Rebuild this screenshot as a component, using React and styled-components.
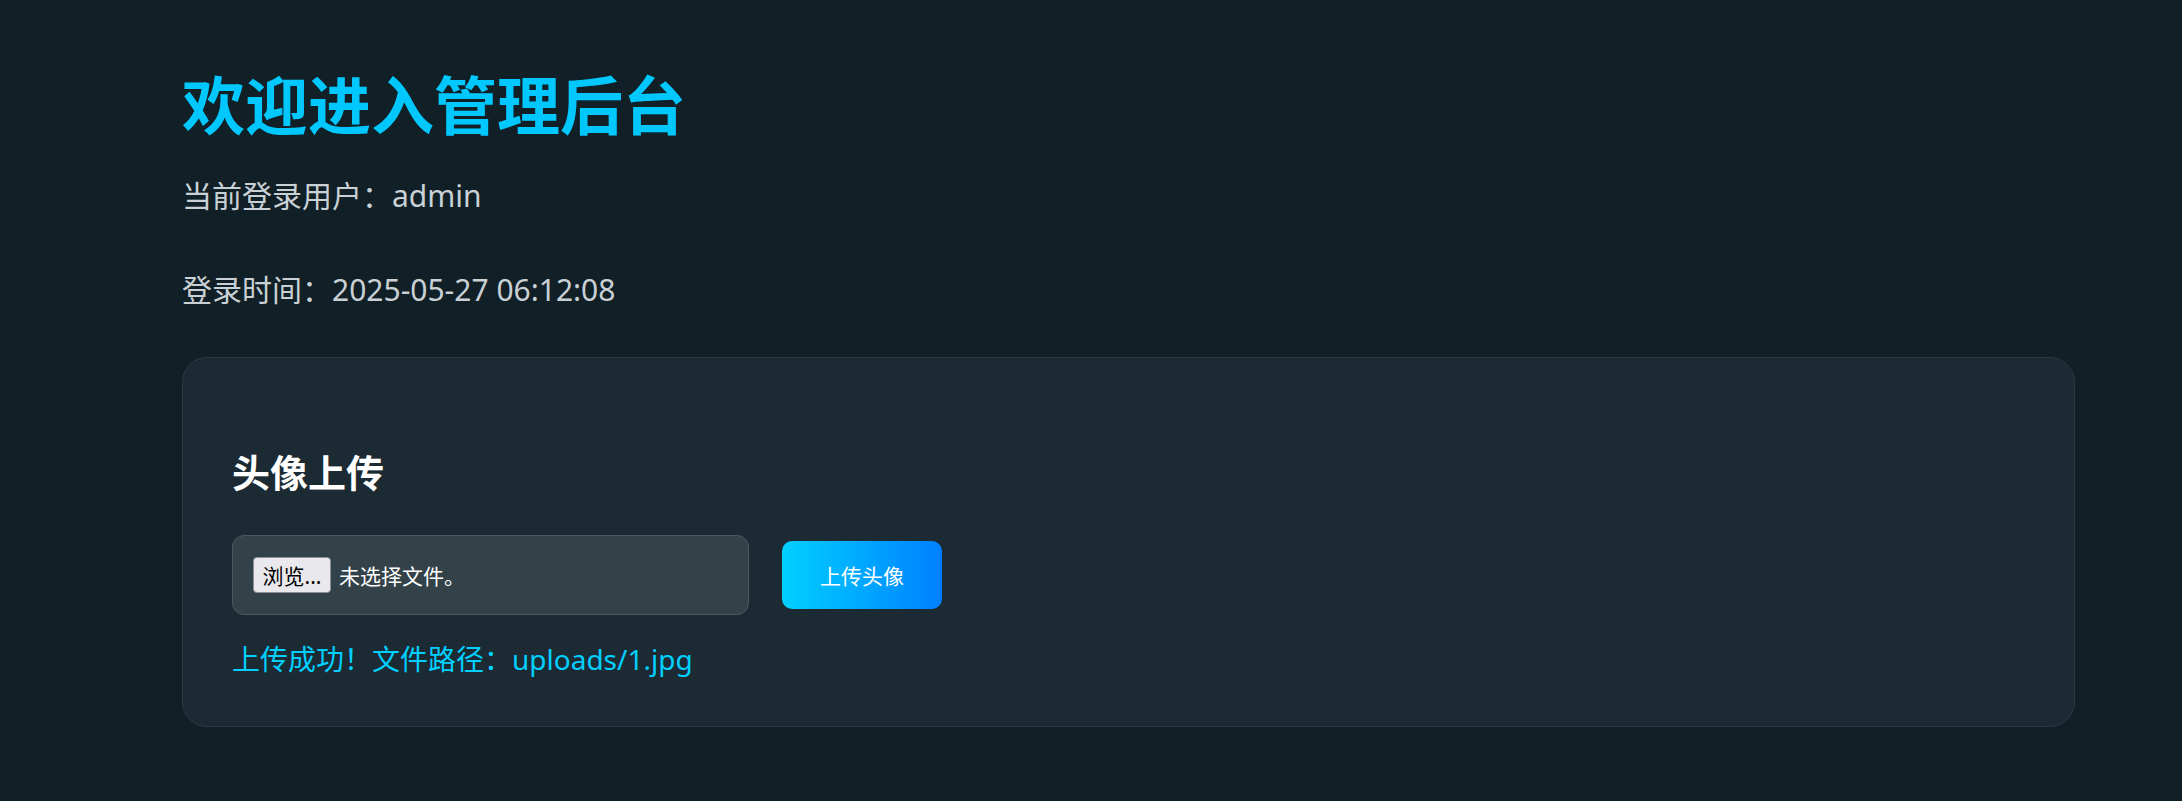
import React from 'react';
import styled, { createGlobalStyle } from 'styled-components';

const Global = createGlobalStyle`
  html, body { margin: 0; padding: 0; background: #111f27; }
  body {
    font-family: "Noto Sans", "Noto Sans CJK SC", sans-serif;
    color: #c9d1d5;
  }
`;

const Page = styled.main`
  min-height: 801px;
  box-sizing: border-box;
  padding: 67px 107px 40px 182px;
  display: flex;
  flex-direction: column;
`;

const Title = styled.h1`
  margin: 0;
  font-size: 63px;
  font-weight: 700;
  line-height: 1.2;
  color: #00c8ff;
`;

const Info = styled.p`
  margin: ${(p) => p.$top}px 0 0;
  font-size: 30px;
  line-height: 1.3;
  color: #c9d1d5;
`;

const Card = styled.section`
  margin-top: 48px;
  background: #1c2b33;
  border: 1px solid #2c3b43;
  border-radius: 25px;
  padding: 92px 49px 48px;
  display: flex;
  flex-direction: column;
`;

const CardTitle = styled.h2`
  margin: 0;
  font-size: 38px;
  font-weight: 700;
  line-height: 1.2;
  color: #ffffff;
`;

const Row = styled.div`
  margin-top: 40px;
  display: flex;
  align-items: center;
  gap: 33px;
`;

const FileBox = styled.label`
  box-sizing: border-box;
  width: 517px;
  height: 80px;
  padding: 0 20px;
  display: flex;
  align-items: center;
  gap: 8px;
  background: #334249;
  border: 1px solid #4d5960;
  border-radius: 12px;
  cursor: pointer;
`;

const BrowseButton = styled.span`
  box-sizing: border-box;
  height: 36px;
  width: 78px;
  display: inline-flex;
  align-items: center;
  justify-content: center;
  background: #e9e9ed;
  border: 1px solid #8f8f9d;
  border-radius: 4px;
  color: #000;
  font-size: 21px;
  white-space: nowrap;
`;

const FileText = styled.span`
  color: #ffffff;
  font-size: 21px;
`;

const UploadButton = styled.button`
  box-sizing: border-box;
  width: 160px;
  height: 68px;
  border: none;
  border-radius: 10px;
  background: linear-gradient(90deg, #00d0ff, #0080ff);
  color: #ffffff;
  font-family: inherit;
  font-size: 21px;
  cursor: pointer;
`;

const Status = styled.p`
  margin: 26px 0 0;
  font-size: 28px;
  line-height: 1.3;
  color: #00cfff;
`;

export default function App() {
  return (
    <>
      <Global />
      <Page>
        <Title>欢迎进入管理后台</Title>
        <Info $top={33}>当前登录用户：admin</Info>
        <Info $top={55}>登录时间：2025-05-27 06:12:08</Info>
        <Card>
          <CardTitle>头像上传</CardTitle>
          <Row>
            <FileBox>
              <BrowseButton>浏览...</BrowseButton>
              <FileText>未选择文件。</FileText>
            </FileBox>
            <UploadButton type="button">上传头像</UploadButton>
          </Row>
          <Status>上传成功！文件路径：uploads/1.jpg</Status>
        </Card>
      </Page>
    </>
  );
}
